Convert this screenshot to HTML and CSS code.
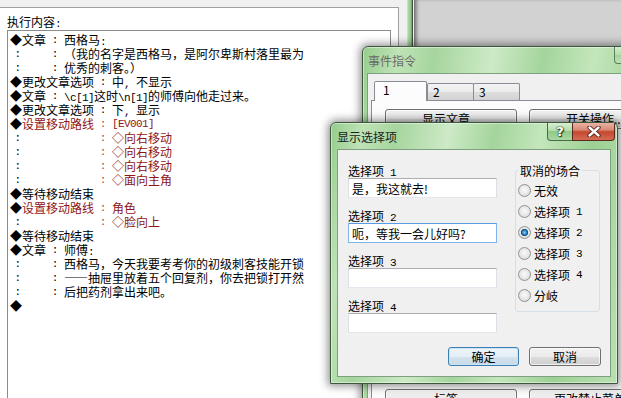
FILE: index.html
```html
<!DOCTYPE html>
<html lang="zh-CN">
<head>
<meta charset="utf-8">
<title>事件编辑</title>
<link rel="stylesheet" href="styles.css">
</head>
<body>
<div class="screen">
  <div class="editor">
    <section class="panel">
      <div class="caption">执行内容<span class="a">:</span></div>
      <div class="list">
        <div class="row"><span class="m">◆</span><span class="cmd">文章</span><span class="sep">:</span><span>西格马<span class="a">:</span></span></div>
        <div class="row"><span class="m c">:</span><span class="cmd w2"></span><span class="sep">:</span><span>（我的名字是西格马，是阿尔卑斯村落里最为</span></div>
        <div class="row"><span class="m c">:</span><span class="cmd w2"></span><span class="sep">:</span><span>优秀的刺客。）</span></div>
        <div class="row"><span class="m">◆</span><span class="cmd">更改文章选项</span><span class="sep">:</span><span>中<span class="a">, </span>不显示</span></div>
        <div class="row"><span class="m">◆</span><span class="cmd">文章</span><span class="sep">:</span><span><span class="a">\c[1]</span>这时<span class="a">\n[1]</span>的师傅向他走过来。</span></div>
        <div class="row"><span class="m">◆</span><span class="cmd">更改文章选项</span><span class="sep">:</span><span>下<span class="a">, </span>显示</span></div>
        <div class="row red"><span class="m">◆</span><span class="cmd">设置移动路线</span><span class="sep">:</span><span class="a">[EV001]</span></div>
        <div class="row red"><span class="m c">:</span><span class="cmd w6"></span><span class="sep">:</span><span>◇向右移动</span></div>
        <div class="row red"><span class="m c">:</span><span class="cmd w6"></span><span class="sep">:</span><span>◇向右移动</span></div>
        <div class="row red"><span class="m c">:</span><span class="cmd w6"></span><span class="sep">:</span><span>◇向右移动</span></div>
        <div class="row red"><span class="m c">:</span><span class="cmd w6"></span><span class="sep">:</span><span>◇面向主角</span></div>
        <div class="row"><span class="m">◆</span><span class="cmd">等待移动结束</span></div>
        <div class="row red"><span class="m">◆</span><span class="cmd">设置移动路线</span><span class="sep">:</span><span>角色</span></div>
        <div class="row red"><span class="m c">:</span><span class="cmd w6"></span><span class="sep">:</span><span>◇脸向上</span></div>
        <div class="row"><span class="m">◆</span><span class="cmd">等待移动结束</span></div>
        <div class="row"><span class="m">◆</span><span class="cmd">文章</span><span class="sep">:</span><span>师傅<span class="a">:</span></span></div>
        <div class="row"><span class="m c">:</span><span class="cmd w2"></span><span class="sep">:</span><span>西格马，今天我要考考你的初级刺客技能开锁</span></div>
        <div class="row"><span class="m c">:</span><span class="cmd w2"></span><span class="sep">:</span><span>——抽屉里放着五个回复剂，你去把锁打开然</span></div>
        <div class="row"><span class="m c">:</span><span class="cmd w2"></span><span class="sep">:</span><span>后把药剂拿出来吧。</span></div>
        <div class="row"><span class="m">◆</span></div>
      </div>
    </section>
    <div class="edge"></div>
  </div>
  <div class="desktop"></div>

  <div class="win event">
    <div class="titlebar">
      <span class="title">事件指令</span>
      <span class="cbtn"></span>
    </div>
    <div class="client eclient">
      <div class="tabs">
        <div class="tab active">1</div>
        <div class="tab">2</div>
        <div class="tab">3</div>
      </div>
      <div class="tabpanel">
        <button class="btn">显示文章...</button>
        <button class="btn">开关操作...</button>
        <button class="btn last">标签...</button>
        <button class="btn last">更改禁止菜单...</button>
      </div>
    </div>
  </div>

  <div class="win dialog">
    <div class="titlebar">
      <span class="title dtitle">显示选择项</span>
      <div class="capbtns">
        <span class="help">?</span>
        <span class="close"><svg width="16" height="11" viewBox="0 0 16 11"><path d="M3.5 1.5 L12.5 9.5 M12.5 1.5 L3.5 9.5" stroke="#4a1c14" stroke-width="4.2" stroke-linecap="round"/><path d="M3.5 1.5 L12.5 9.5 M12.5 1.5 L3.5 9.5" stroke="#ffffff" stroke-width="2.4" stroke-linecap="round"/></svg></span>
      </div>
    </div>
    <div class="client dbody">
      <div class="top">
        <div class="fields">
          <label class="field"><span class="lbl">选择项<span class="a"> 1</span></span><input class="txt" type="text" value="是，我这就去!"></label>
          <label class="field"><span class="lbl">选择项<span class="a"> 2</span></span><input class="txt focus" type="text" value="呃，等我一会儿好吗?"></label>
          <label class="field"><span class="lbl">选择项<span class="a"> 3</span></span><input class="txt" type="text" value=""></label>
          <label class="field"><span class="lbl">选择项<span class="a"> 4</span></span><input class="txt" type="text" value=""></label>
        </div>
        <fieldset class="group">
          <legend>取消的场合</legend>
          <label class="opt"><input type="radio" name="cancel">无效</label>
          <label class="opt"><input type="radio" name="cancel">选择项<span class="a"> 1</span></label>
          <label class="opt"><input type="radio" name="cancel" checked>选择项<span class="a"> 2</span></label>
          <label class="opt"><input type="radio" name="cancel">选择项<span class="a"> 3</span></label>
          <label class="opt"><input type="radio" name="cancel">选择项<span class="a"> 4</span></label>
          <label class="opt"><input type="radio" name="cancel">分岐</label>
        </fieldset>
      </div>
      <div class="actions">
        <button class="btn def">确定</button>
        <button class="btn cancel">取消</button>
      </div>
    </div>
  </div>
</div>
</body>
</html>
```

FILE: styles.css
```css
* { box-sizing: border-box; }
html, body { margin: 0; padding: 0; }
body {
  width: 621px;
  height: 398px;
  overflow: hidden;
  background: #d2d2d2;
  font-family: "Noto Sans CJK SC", "Noto Sans", sans-serif;
  font-size: 12px;
  color: #000;
}
.screen {
  position: relative;
  width: 621px;
  height: 398px;
  display: flex;
  overflow: hidden;
}
.a {
  font-family: "Liberation Mono", monospace;
  font-size: 11px;
  letter-spacing: -0.6px;
  white-space: pre;
}

/* editor window behind */
.editor {
  width: 414px;
  height: 398px;
  flex-shrink: 0;
  display: flex;
  background: #f0f0f0;
}
.panel {
  width: 399px;
  margin-top: 7px;
  background: #fff;
  border-top: 1px solid #a0a0a0;
  border-right: 1px solid #a0a0a0;
  padding: 6px 0 0 7px;
  display: flex;
  flex-direction: column;
}
.caption {
  height: 16px;
  line-height: 15px;
}
.list {
  width: 384px;
  flex: 1;
  border: 1px solid #8c8c8c;
  border-bottom: none;
  padding: 2px 0 0 2px;
}
.row {
  display: flex;
  height: 14px;
  line-height: 14px;
  white-space: pre;
}
.row .m {
  width: 12px;
  flex-shrink: 0;
  text-align: center;
}
.row .m.c {
  text-align: right;
  font-family: "Liberation Mono", monospace;
  font-size: 11px;
  padding-right: 1px;
}
.row .w2 { width: 24px; }
.row .w6 { width: 72px; }
.row .sep {
  width: 18px;
  flex-shrink: 0;
  text-align: center;
  font-family: "Liberation Mono", monospace;
  font-size: 11px;
}
.row.red { color: #8e1616; }
.row.red .m { color: #000; }
.row.red .sep { color: #9a4a4a; }

.edge {
  width: 6px;
  margin-left: 8px;
  background: linear-gradient(90deg, #d3ead0 0, #a9d6a2 30%, #94c98b 70%, #6d9a66 100%);
  border-right: 1px solid #3f4f3f;
}
.desktop {
  flex: 1;
  background: #d2d2d2;
  box-shadow: inset 4px 0 4px -2px rgba(0, 0, 0, 0.55);
}

/* windows */
.win {
  position: absolute;
  border: 1px solid #3d573d;
  border-radius: 6px 6px 0 0;
  background: linear-gradient(100deg, #95cd8c 0%, #bfe3b7 10%, #a6d59e 20%, #cdeac6 36%, #a4d59c 50%, #c4e6bc 64%, #9dd194 80%, #b9e0b1 100%);
  box-shadow: 0 0 8px 2px rgba(0, 0, 0, 0.45), inset 0 0 0 1px rgba(255, 255, 255, 0.45);
  display: flex;
  flex-direction: column;
}
.titlebar {
  height: 26px;
  flex-shrink: 0;
  display: flex;
  justify-content: space-between;
  align-items: flex-start;
}
.title {
  padding-top: 6px;
  line-height: 15px;
  padding-left: 1px;
}
.client {
  border: 1px solid #7fa07f;
  background: #f0f0f0;
}

.event {
  left: 362px;
  top: 46px;
  width: 300px;
  height: 380px;
  padding: 0 4px;
}
.event .title { color: #6a6a6a; }
.cbtn {
  width: 43px;
  height: 17px;
  border: 1px solid #5d7d5d;
  border-top: none;
  border-radius: 0 0 4px 4px;
  background: linear-gradient(#d6eed0, #b5dcad 50%, #a3d19a 51%, #bfe3b7);
}
.eclient {
  flex: 1;
  display: flex;
  flex-direction: column;
  padding: 7px 0 0 3px;
}
.tabs {
  height: 19px;
  display: flex;
  align-items: flex-end;
  padding-left: 3px;
}
.tab {
  height: 17px;
  width: 47px;
  line-height: 15px;
  padding-left: 5px;
  border: 1px solid #898c95;
  border-bottom: none;
  border-radius: 2px 2px 0 0;
  background: linear-gradient(#f3f3f3, #ebebeb 50%, #dedede 51%, #d2d2d2);
}
.tab + .tab { margin-left: -1px; }
.tab.active {
  width: 53px;
  height: 20px;
  margin-bottom: -1px;
  padding-left: 8px;
  background: #fcfcfc;
  position: relative;
  z-index: 1;
}
.tab.active + .tab { margin-left: 0; }
.tabpanel {
  flex: 1;
  border: 1px solid #898c95;
  background: #fcfcfc;
  padding: 8px 0 0 13px;
  display: grid;
  grid-template-columns: 132px 132px;
  grid-template-rows: repeat(14, 20px);
  column-gap: 12px;
  row-gap: 1.5px;
  align-content: start;
}
.tabpanel .last { grid-row: 14; }

.btn {
  font: inherit;
  font-size: 12px;
  color: #000;
  border: 1px solid #707070;
  border-radius: 3px;
  background: linear-gradient(#f2f2f2, #ebebeb 50%, #dddddd 51%, #cfcfcf);
  box-shadow: inset 0 0 0 1px rgba(255, 255, 255, 0.7);
  padding: 0;
  line-height: 16px;
  text-align: center;
  white-space: nowrap;
}

/* dialog */
.dialog {
  left: 330px;
  top: 122px;
  width: 288px;
  height: 262px;
  padding: 0 6px 6px;
}
.dtitle { color: #1c1c1c; padding-left: 0; }
.capbtns {
  display: flex;
  margin-right: -4px;
}
.help {
  width: 25px;
  height: 18px;
  border: 1px solid #4a684a;
  border-top: none;
  border-right: none;
  border-radius: 0 0 0 4px;
  background: linear-gradient(#d9efd4, #b2dcaa 45%, #92c888 50%, #a9d9a0);
  color: #fff;
  font-family: "DejaVu Sans", sans-serif;
  font-weight: bold;
  font-size: 13px;
  line-height: 17px;
  text-align: center;
  text-shadow: 0 0 1px #1d3a1d, 0 0 2px #1d3a1d, 1px 1px 1px #1d3a1d;
}
.close {
  width: 43px;
  height: 18px;
  border: 1px solid #5a2a22;
  border-top: none;
  border-radius: 0 0 4px 0;
  background: linear-gradient(#eab3a4, #d98a78 40%, #c4482f 52%, #d46c52);
  display: flex;
  align-items: center;
  justify-content: center;
}
.dbody {
  flex: 1;
  display: flex;
  flex-direction: column;
  padding: 13px 9px 0 10px;
}
.top {
  display: flex;
  gap: 18px;
}
.fields {
  width: 149px;
  display: flex;
  flex-direction: column;
  gap: 10px;
}
.field {
  display: flex;
  flex-direction: column;
}
.lbl {
  height: 15px;
  line-height: 15px;
}
.txt {
  width: 149px;
  height: 20px;
  font: inherit;
  font-size: 12px;
  color: #000;
  padding: 0 3px;
  background: #fff;
  border: 1px solid #dbdfe6;
  border-top-color: #abadb3;
  border-bottom-color: #e3e9ef;
  outline: none;
}
.txt.focus {
  border-color: #7eb4ea;
  border-top-color: #569de5;
}
.group {
  width: 85px;
  margin: 0;
  padding: 2px 0 5px 2px;
  border: 1px solid #d5dfe5;
  border-radius: 3px;
  min-width: 0;
  align-self: flex-start;
}
.group legend {
  padding: 0 2px;
  line-height: 15px;
}
.opt {
  height: 21px;
  display: flex;
  align-items: center;
  white-space: pre;
}
.opt input {
  -webkit-appearance: none;
  appearance: none;
  width: 13px;
  height: 13px;
  margin: 0 3px 0 0;
  flex-shrink: 0;
  border-radius: 50%;
  border: 1px solid #939393;
  background: radial-gradient(circle at 50% 45%, #fbfbfb 0, #e6e6e6 55%, #cfcfcf 100%);
}
.opt input:checked {
  background:
    radial-gradient(circle at 50% 50%, #8fd3f6 0, #2f86c6 2px, #17507f 3.3px, transparent 4px),
    radial-gradient(circle at 50% 45%, #fbfbfb 0, #e6e6e6 55%, #cfcfcf 100%);
}
.actions {
  margin-top: 14px;
  display: flex;
  justify-content: flex-end;
  gap: 10px;
}
.actions .btn {
  width: 71px;
  height: 19px;
  line-height: 16px;
}
.actions .btn.cancel { width: 72px; }
.actions .btn.def {
  border-color: #3c7fb1;
  box-shadow: inset 0 0 0 1px #c9e6f8;
  background: linear-gradient(#eef5fa, #e4eef5 50%, #d4e3ee 51%, #c8d9e6);
}
```
